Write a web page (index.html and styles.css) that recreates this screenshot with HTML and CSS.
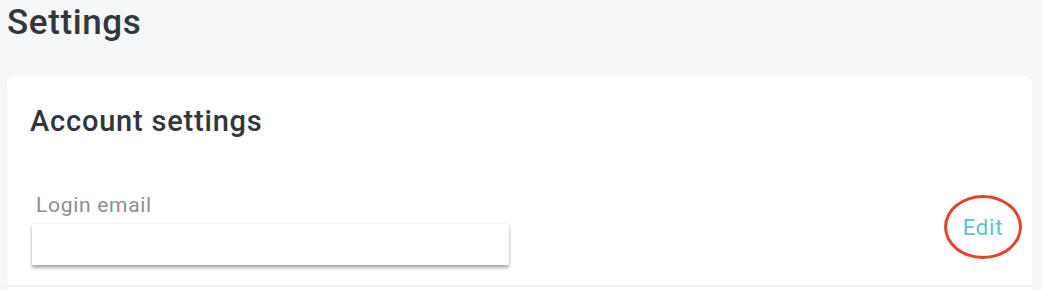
FILE: index.html
```html
<!DOCTYPE html>
<html lang="en">
<head>
    <meta charset="UTF-8">
    <meta name="viewport" content="width=device-width, initial-scale=1.0">
    <title>Settings</title>
    <link rel="stylesheet" href="styles.css">
</head>
<body>

    <h1 class="page-title">Settings</h1>

    <div class="settings-card">
        <h2 class="card-title">Account settings</h2>

        <div class="field-row">
            <div class="field">
                <label class="field-label" for="login-email">Login email</label>
                <input class="field-input" id="login-email" type="email">
            </div>
            <button class="edit-button">Edit</button>
        </div>

        <div class="card-divider"></div>
    </div>

</body>
</html>
```

FILE: styles.css
```css
body {
    font-family: 'Roboto', 'Liberation Sans', sans-serif;
    background-color: #f6f7f9; /* page gray */
    margin: 0;
    padding: 0 10px 0 7px;
    color: #33363b;
    overflow: hidden;
}

.page-title {
    font-size: 35px;
    font-weight: 500;
    margin: 0;
    padding-top: 3px;
    height: 72px;
    line-height: 40px;
    letter-spacing: 0.6px;
}

.settings-card {
    background-color: #ffffff;
    border-radius: 9px;
    padding: 26px 10px 20px 23px;
    box-shadow: 0 0 2px rgba(0, 0, 0, 0.04);
}

.card-title {
    font-size: 29px;
    font-weight: 500;
    margin: 0;
    line-height: 40px;
    letter-spacing: 0.8px;
}

.field-row {
    display: flex;
    justify-content: space-between;
    align-items: center;
    margin-top: 52px;
}

.field {
    display: flex;
    flex-direction: column;
}

.field-label {
    font-size: 21px;
    color: #8b8f96;
    margin-left: 6px;
    margin-bottom: 7px;
    line-height: 24px;
    letter-spacing: 0.7px;
}

.field-input {
    width: 477px;
    height: 41px;
    margin-left: 2px;
    border: none;
    box-sizing: border-box;
    background-color: #ffffff;
    box-shadow: 0 3px 3px rgba(0, 0, 0, 0.3), 0 0 2px rgba(0, 0, 0, 0.12);
    outline: none;
}

.edit-button {
    font-family: inherit;
    font-size: 22px;
    letter-spacing: 0.8px;
    color: #5bc2d8; /* light cyan link */
    background: none;
    border: 3px solid #e5432b; /* red ring */
    border-radius: 50%;
    width: 78px;
    height: 64px;
    padding: 0;
    margin-top: -4px;
    cursor: pointer;
}

.card-divider {
    height: 2px;
    background-color: #eef0f3;
    margin: 20px -10px 0 -23px;
}
```
